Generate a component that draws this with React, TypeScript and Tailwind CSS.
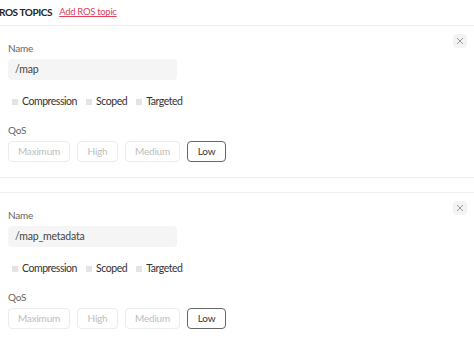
import React from "react";

type Topic = { name: string; qos: string };

const topics: Topic[] = [
  { name: "/map", qos: "Low" },
  { name: "/map_metadata", qos: "Low" },
];

const qosLevels = [
  { label: "Maximum", width: "w-[62px]" },
  { label: "High", width: "w-[41px]" },
  { label: "Medium", width: "w-[55px]" },
  { label: "Low", width: "w-[39px]" },
];
const flags = ["Compression", "Scoped", "Targeted"];

const TopicCard: React.FC<{ topic: Topic; first?: boolean }> = ({ topic, first }) => {
  return (
    <div
      className={`relative px-2 pt-[15px] pb-[15px] border-b border-[#f0f0f0] ${
        first ? "" : "border-t"
      }`}
    >
      {/* Bouton fermer */}
      <button className="absolute top-2 right-[7px] w-[14px] h-[14px] flex items-center justify-center rounded-sm bg-[#f3f3f3] text-[#999]">
        <svg width="8" height="8" viewBox="0 0 8 8" fill="none" stroke="currentColor" strokeWidth="1">
          <path d="M1 1L7 7M7 1L1 7" />
        </svg>
      </button>

      <div className="text-[10px] leading-[14px] tracking-[-0.2px] text-[#666]">Name</div>
      <div className="mt-1 w-[169px] h-[21px] rounded bg-[#f5f5f5] px-[7px] flex items-center text-[10.5px] tracking-[-0.2px] text-[#444]">
        {topic.name}
      </div>

      <div className="mt-[15px] flex items-center gap-[9px] h-[14px] pl-1 text-[10.5px] tracking-[-0.45px] text-[#333]">
        {flags.map((f) => (
          <label key={f} className="flex items-center gap-[4px]">
            <span className="inline-block w-[6px] h-[6px] bg-[#e4e4e4]" />
            {f}
          </label>
        ))}
      </div>

      <div className="mt-[14px] text-[10px] leading-[14px] tracking-[-0.2px] text-[#666]">QoS</div>
      <div className="mt-1 flex gap-[7px]">
        {qosLevels.map((q) => (
          <button
            key={q.label}
            className={`${q.width} h-[21px] rounded text-[10px] tracking-[-0.2px] border ${
              q.label === topic.qos
                ? "border-[#666] text-[#333]"
                : "border-[#ececec] text-[#bdbdbd]"
            }`}
          >
            {q.label}
          </button>
        ))}
      </div>
    </div>
  );
};

export default function App() {
  return (
    <div className="w-full min-h-screen bg-white font-['Lato',sans-serif] overflow-hidden">
      <div className="h-[26px] flex items-center gap-[7px] -ml-px border-b border-[#f0f0f0]">
        <span className="text-[10px] font-bold tracking-[-0.4px] text-[#222]">ROS TOPICS</span>
        <a href="#" className="text-[9.5px] tracking-[-0.3px] text-[#e0405a] underline">
          Add ROS topic
        </a>
      </div>

      {topics.map((t, i) => (
        <div key={t.name} className={i > 0 ? "mt-[14px]" : ""}>
          <TopicCard topic={t} first={i === 0} />
        </div>
      ))}
    </div>
  );
}
